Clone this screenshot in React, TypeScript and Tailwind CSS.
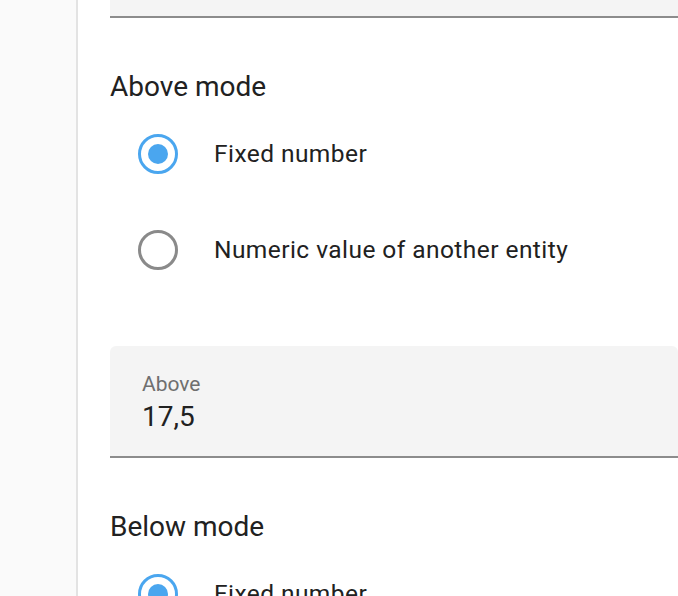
const font = { fontFamily: "Roboto, 'Noto Sans', sans-serif" };

type Option = { label: string; checked: boolean };

function Radio({ checked }: { checked: boolean }) {
  return (
    <span
      className={
        checked
          ? "flex h-[40px] w-[40px] shrink-0 items-center justify-center rounded-full border-[3px] border-[#4aa6ef]"
          : "flex h-[40px] w-[40px] shrink-0 items-center justify-center rounded-full border-[3px] border-[#8a8a8a]"
      }
    >
      {checked && <span className="h-[20px] w-[20px] rounded-full bg-[#4aa6ef]" />}
    </span>
  );
}

function RadioGroup({ options }: { options: Option[] }) {
  return (
    <div className="mt-[1px] flex flex-col">
      {options.map((o) => (
        <label key={o.label} className="flex h-[96px] items-center pl-[28px]">
          <Radio checked={o.checked} />
          <span className="ml-[36px] text-[24.5px] tracking-[0.44px] text-[#212121]">{o.label}</span>
        </label>
      ))}
    </div>
  );
}

export default function App() {
  const modeOptions: Option[] = [
    { label: "Fixed number", checked: true },
    { label: "Numeric value of another entity", checked: false },
  ];

  return (
    <div className="flex h-[596px] w-full overflow-hidden bg-white" style={font}>
      <aside className="w-[78px] shrink-0 border-r-2 border-[#e3e3e3] bg-[#fafafa]" />

      <main className="flex flex-1 flex-col pl-[32px]">
        <div className="h-[18px] shrink-0 border-b-2 border-[#8c8c8c] bg-[#f4f4f4]" />

        <h3 className="mt-[51px] text-[28px] leading-[36px] text-[#212121]">Above mode</h3>
        <RadioGroup options={modeOptions} />

        <div className="mt-[48px] h-[112px] shrink-0 rounded-t-[6px] border-b-2 border-[#8c8c8c] bg-[#f4f4f4] pl-[32px] pt-[24px]">
          <p className="text-[21px] leading-[28px] text-[#6f6f6f]">Above</p>
          <p className="mt-[1px] text-[28px] leading-[36px] text-[#212121]">17,5</p>
        </div>

        <h3 className="mt-[51px] text-[28px] leading-[36px] text-[#212121]">Below mode</h3>
        <RadioGroup options={modeOptions} />
      </main>
    </div>
  );
}
